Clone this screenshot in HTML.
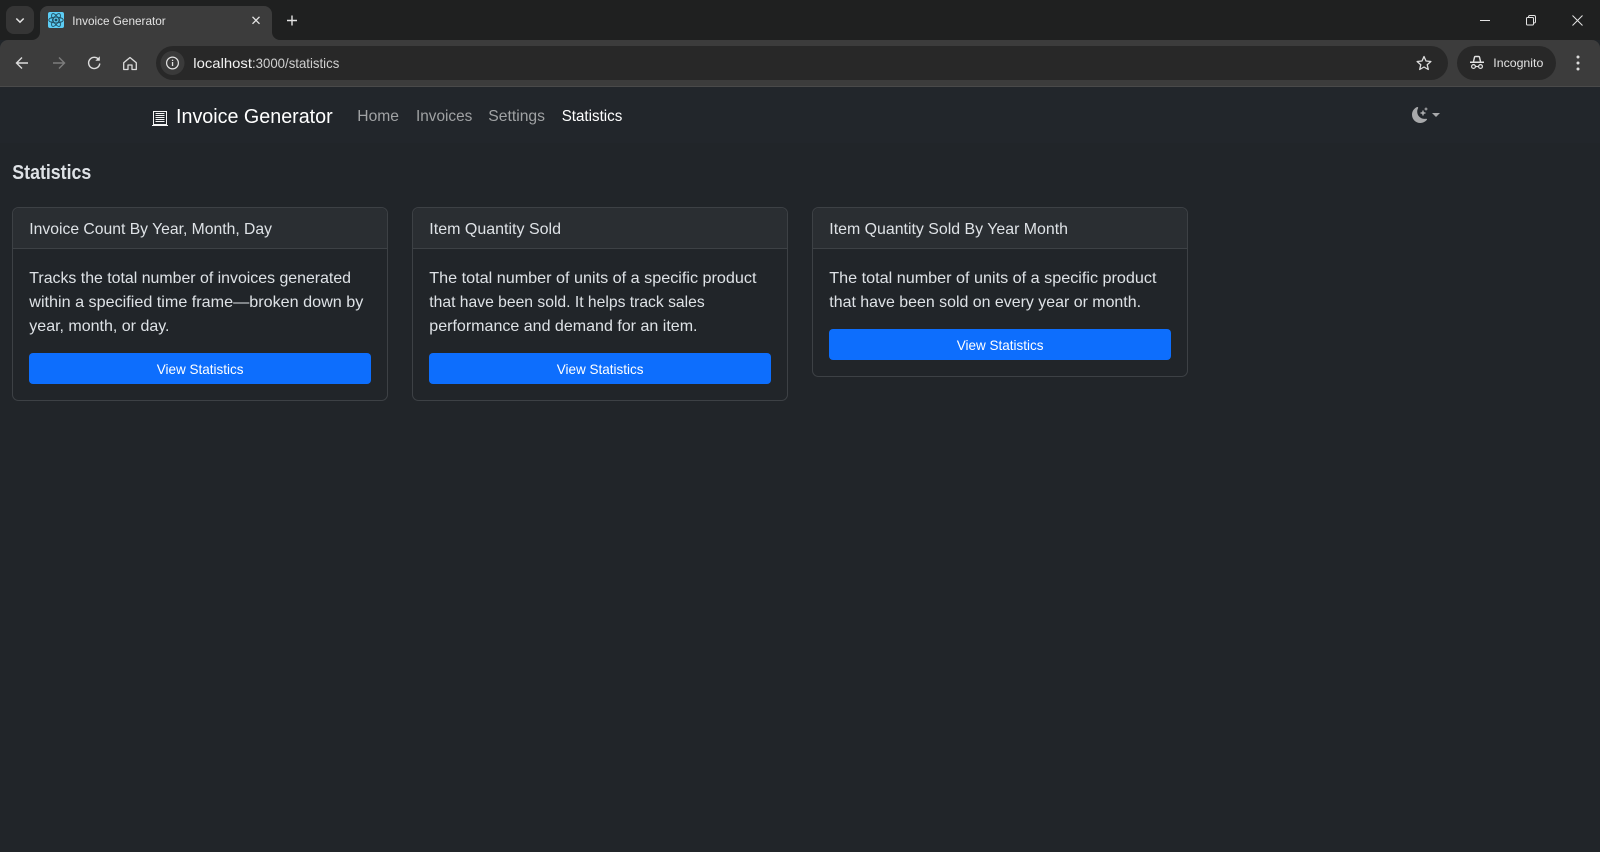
<!DOCTYPE html>
<html lang="en">
<head>
<meta charset="utf-8">
<title>Invoice Generator</title>
<style>
html,body{margin:0;padding:0;width:1600px;height:852px;overflow:hidden;background:#212529}
svg{display:block;position:absolute;left:0;top:0}
text{font-family:"Liberation Sans",sans-serif;white-space:pre}
.p{font-size:16px;fill:#dee2e6}
.b{font-size:14px;fill:#fff}
.n{font-size:16px;fill:#a0a2a4}
</style>
</head>
<body>
<svg width="1600" height="852" viewBox="0 0 1600 852" xmlns="http://www.w3.org/2000/svg">
  <rect width="1600" height="852" fill="#212529"/>
  <!-- browser chrome -->
  <rect width="1600" height="40" fill="#1f2020"/>
  <path d="M0 87V48a8 8 0 0 1 8-8H1592a8 8 0 0 1 8 8V87z" fill="#3c3c3c"/>
  <rect y="86" width="1600" height="1" fill="#4a4a4a"/>
  <rect x="6" y="6" width="28" height="28" rx="8" fill="#353535"/>
  <path d="M16.300 18.500l3.700 3.700 3.700-3.700" fill="none" stroke="#e3e3e3" stroke-width="1.500"/>
  <path d="M32 40a8 8 0 0 0 8-8V14a8 8 0 0 1 8-8H264a8 8 0 0 1 8 8V32a8 8 0 0 0 8 8z" fill="#3c3c3c"/>
  <!-- favicon -->
  <rect x="48" y="12" width="16" height="16" rx="2" fill="#5ccdf5"/>
  <g fill="none" stroke="#1f4a5c" stroke-width="0.900">
    <ellipse cx="56" cy="20" rx="7.200" ry="2.900"/>
    <ellipse cx="56" cy="20" rx="7.200" ry="2.900" transform="rotate(60 56 20)"/>
    <ellipse cx="56" cy="20" rx="7.200" ry="2.900" transform="rotate(120 56 20)"/>
  </g>
  <circle cx="56" cy="20" r="1.400" fill="#1f4a5c"/>
  <text x="72.300" y="25" font-size="12" fill="#e3e3e3" textLength="93.400" lengthAdjust="spacingAndGlyphs">Invoice Generator</text>
  <path d="M252.500 16.800l7 7M259.500 16.800l-7 7" stroke="#e3e3e3" stroke-width="1.300"/>
  <path d="M292 15.500v10M287 20.500h10" stroke="#e3e3e3" stroke-width="1.400"/>
  <!-- window controls -->
  <rect x="1480" y="20" width="10" height="1" fill="#e3e3e3"/>
  <g fill="none" stroke="#e3e3e3" stroke-width="1">
    <rect x="1526.500" y="17.500" width="7" height="7.500" rx="1"/>
    <path d="M1528.500 17.500v-.5a1.500 1.500 0 0 1 1.500-1.500h4a1.500 1.500 0 0 1 1.500 1.500v4.500a1.500 1.500 0 0 1-1.500 1.500h-.5"/>
    <path d="M1572.500 15.500l10 10M1582.500 15.500l-10 10"/>
  </g>
  <!-- nav icons -->
  <g fill="none" stroke="#dcdcdc" stroke-width="1.400">
    <path d="M28 63H17M22 57.500L16.500 63l5.500 5.500"/>
    <path d="M53 63H64M59 57.500L64.500 63 59 68.500" stroke="#7d7d7d"/>
    <path d="M99 60a5.600 5.600 0 1 0 .8 3.500"/>
    <path d="M130 57.500l-6.300 5.200v6.800h4.300v-4.500h4v4.500h4.300v-6.800z" stroke-width="1.300" stroke-linejoin="round"/>
  </g>
  <path d="M99.800 56.300v4.500h-4.500z" fill="#dcdcdc"/>
  <!-- omnibox -->
  <rect x="156" y="46" width="1292" height="34" rx="17" fill="#282828"/>
  <circle cx="172.500" cy="63" r="12" fill="#3a3a3a"/>
  <circle cx="172.500" cy="63" r="5.900" fill="none" stroke="#e3e3e3" stroke-width="1.200"/>
  <rect x="171.900" y="62" width="1.300" height="4" fill="#e3e3e3"/>
  <rect x="171.900" y="59.700" width="1.300" height="1.300" fill="#e3e3e3"/>
  <text x="193.300" y="68" font-size="14" fill="#f2f2f2" textLength="58.700" lengthAdjust="spacingAndGlyphs">localhost</text>
  <text x="252" y="68" font-size="14" fill="#d0d0d0" textLength="87.300" lengthAdjust="spacingAndGlyphs">:3000/statistics</text>
  <path d="M1424 56.500l2 4.500 4.900.5-3.700 3.200 1.100 4.800-4.300-2.500-4.300 2.500 1.100-4.800-3.700-3.200 4.900-.5z" fill="none" stroke="#dcdcdc" stroke-width="1.300" stroke-linejoin="round"/>
  <!-- incognito -->
  <rect x="1457" y="46" width="99" height="34" rx="17" fill="#282828"/>
  <path d="M1473.500 61.500l1-4.300a1 1 0 0 1 1-.7h3a1 1 0 0 1 1 .7l1 4.300" fill="none" stroke="#e3e3e3" stroke-width="1.400"/>
  <rect x="1470" y="61.500" width="14" height="1.500" fill="#e3e3e3"/>
  <g fill="none" stroke="#e3e3e3" stroke-width="1.200">
    <circle cx="1473.500" cy="66.500" r="1.900"/>
    <circle cx="1480.500" cy="66.500" r="1.900"/>
    <path d="M1475.400 66.500h3.200"/>
  </g>
  <text x="1493.300" y="67" font-size="12" fill="#e3e3e3" textLength="50" lengthAdjust="spacingAndGlyphs">Incognito</text>
  <g fill="#dcdcdc"><circle cx="1578" cy="57" r="1.500"/><circle cx="1578" cy="63" r="1.500"/><circle cx="1578" cy="69" r="1.500"/></g>

  <!-- navbar -->
  <rect y="87" width="1600" height="56" fill="#22262b"/>
  <rect x="153.500" y="111.500" width="13" height="13" fill="none" stroke="#f4f4f4" stroke-width="1"/>
  <rect x="152" y="125" width="16" height="1" fill="#f4f4f4"/>
  <g fill="#f4f4f4">
    <rect x="155.500" y="113" width="9" height="1"/><rect x="155.500" y="115" width="9" height="1"/>
    <rect x="155.500" y="117" width="9" height="1"/><rect x="155.500" y="119" width="9" height="1"/>
    <rect x="155.500" y="121" width="9" height="1"/>
  </g>
  <text x="176" y="123" font-size="20" fill="#fff" textLength="156.700" lengthAdjust="spacingAndGlyphs">Invoice Generator</text>
  <text class="n" x="357.300" y="121" textLength="41.700" lengthAdjust="spacingAndGlyphs">Home</text>
  <text class="n" x="416" y="121" textLength="56.300" lengthAdjust="spacingAndGlyphs">Invoices</text>
  <text class="n" x="488.300" y="121" textLength="56.700" lengthAdjust="spacingAndGlyphs">Settings</text>
  <text class="n" x="561.700" y="121" style="fill:#fff" textLength="60.600" lengthAdjust="spacingAndGlyphs">Statistics</text>
  <g transform="translate(1412 107)" fill="#a8a9ab">
    <path d="M6 .278a.77.77 0 0 1 .08.858 7.2 7.2 0 0 0-.878 3.46c0 4.021 3.278 7.277 7.318 7.277q.792-.001 1.533-.16a.79.79 0 0 1 .81.316.73.73 0 0 1-.031.893A8.350 8.350 0 0 1 8.344 16C3.734 16 0 12.286 0 7.710 0 4.266 2.114 1.312 5.124.06A.75.75 0 0 1 6 .278"/>
    <path d="M10.794 3.148a.217.217 0 0 1 .412 0l.387 1.162c.173.518.579.924 1.097 1.097l1.162.387a.217.217 0 0 1 0 .412l-1.162.387a1.730 1.730 0 0 0-1.097 1.097l-.387 1.162a.217.217 0 0 1-.412 0l-.387-1.162A1.730 1.730 0 0 0 9.310 6.593l-1.162-.387a.217.217 0 0 1 0-.412l1.162-.387a1.730 1.730 0 0 0 1.097-1.097z"/>
    <path d="M13.863.099a.145.145 0 0 1 .274 0l.258.774c.115.346.386.617.732.732l.774.258a.145.145 0 0 1 0 .274l-.774.258a1.160 1.160 0 0 0-.732.732l-.258.774a.145.145 0 0 1-.274 0l-.258-.774a1.160 1.160 0 0 0-.732-.732l-.774-.258a.145.145 0 0 1 0-.274l.774-.258c.346-.115.617-.386.732-.732z"/>
  </g>
  <path d="M1432 113h8l-4 4z" fill="#a8a9ab"/>

  <!-- heading -->
  <text x="12.300" y="179" font-size="20" font-weight="700" fill="#dee2e6" textLength="79" lengthAdjust="spacingAndGlyphs">Statistics</text>

  <!-- card 1 -->
  <rect x="12.500" y="207.500" width="375" height="193" rx="6" fill="#212529" stroke="#3d4145"/>
  <path d="M13 249V214a6 6 0 0 1 6-6H381a6 6 0 0 1 6 6V249z" fill="#2a2e32"/>
  <rect x="13" y="248" width="374" height="1" fill="#3d4145"/>
  <text class="p" x="29.300" y="234" textLength="242.700" lengthAdjust="spacingAndGlyphs">Invoice Count By Year, Month, Day</text>
  <text class="p" x="29.300" y="283" textLength="321.700" lengthAdjust="spacingAndGlyphs">Tracks the total number of invoices generated</text>
  <text class="p" x="29.300" y="307" textLength="334" lengthAdjust="spacingAndGlyphs">within a specified time frame—broken down by</text>
  <text class="p" x="29.300" y="331" textLength="140.200" lengthAdjust="spacingAndGlyphs">year, month, or day.</text>
  <rect x="29" y="353" width="342" height="31" rx="4" fill="#0d6efd"/>
  <text class="b" x="156.700" y="374" textLength="86.800" lengthAdjust="spacingAndGlyphs">View Statistics</text>

  <!-- card 2 -->
  <rect x="412.500" y="207.500" width="375" height="193" rx="6" fill="#212529" stroke="#3d4145"/>
  <path d="M413 249V214a6 6 0 0 1 6-6H781a6 6 0 0 1 6 6V249z" fill="#2a2e32"/>
  <rect x="413" y="248" width="374" height="1" fill="#3d4145"/>
  <text class="p" x="429.300" y="234" textLength="131.700" lengthAdjust="spacingAndGlyphs">Item Quantity Sold</text>
  <text class="p" x="429.300" y="283" textLength="327.200" lengthAdjust="spacingAndGlyphs">The total number of units of a specific product</text>
  <text class="p" x="429.300" y="307" textLength="275.400" lengthAdjust="spacingAndGlyphs">that have been sold. It helps track sales</text>
  <text class="p" x="429.300" y="331" textLength="268.200" lengthAdjust="spacingAndGlyphs">performance and demand for an item.</text>
  <rect x="429" y="353" width="342" height="31" rx="4" fill="#0d6efd"/>
  <text class="b" x="556.700" y="374" textLength="86.800" lengthAdjust="spacingAndGlyphs">View Statistics</text>

  <!-- card 3 -->
  <rect x="812.500" y="207.500" width="375" height="169" rx="6" fill="#212529" stroke="#3d4145"/>
  <path d="M813 249V214a6 6 0 0 1 6-6H1181a6 6 0 0 1 6 6V249z" fill="#2a2e32"/>
  <rect x="813" y="248" width="374" height="1" fill="#3d4145"/>
  <text class="p" x="829.300" y="234" textLength="238.700" lengthAdjust="spacingAndGlyphs">Item Quantity Sold By Year Month</text>
  <text class="p" x="829.300" y="283" textLength="327.200" lengthAdjust="spacingAndGlyphs">The total number of units of a specific product</text>
  <text class="p" x="829.300" y="307" textLength="311.700" lengthAdjust="spacingAndGlyphs">that have been sold on every year or month.</text>
  <rect x="829" y="329" width="342" height="31" rx="4" fill="#0d6efd"/>
  <text class="b" x="956.700" y="350" textLength="86.800" lengthAdjust="spacingAndGlyphs">View Statistics</text>
</svg>
</body>
</html>
